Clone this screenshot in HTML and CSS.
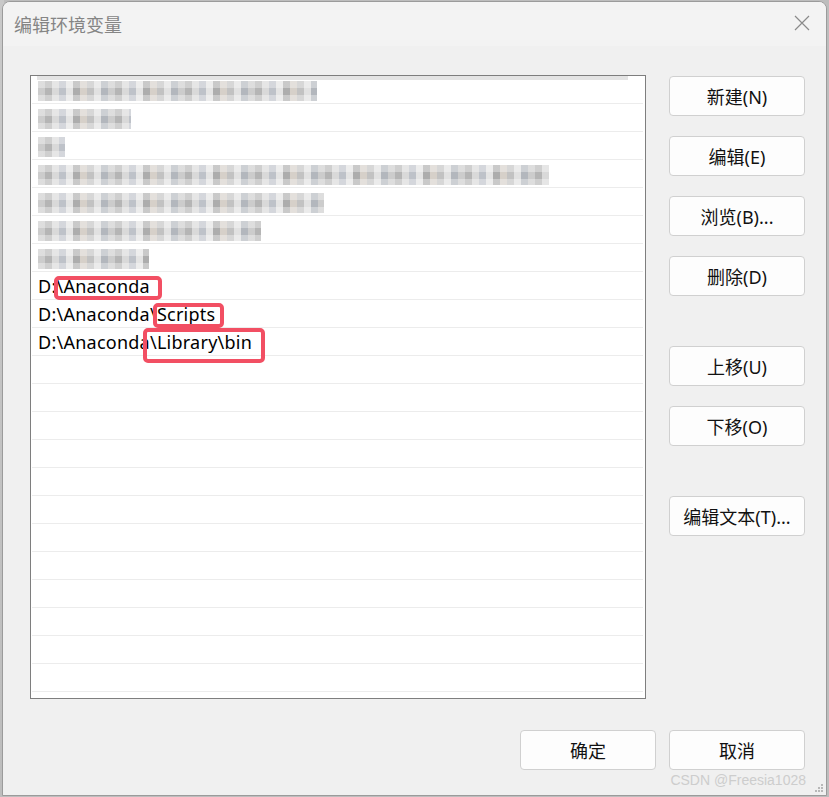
FILE: index.html
```html
<!DOCTYPE html>
<html lang="zh-CN">
<head>
<meta charset="utf-8">
<title>编辑环境变量</title>
<link rel="stylesheet" href="styles.css">
</head>
<body>
<div class="backdrop"></div>
<div class="window">
  <div class="titlebar">
    <span class="title">编辑环境变量</span>
    <svg class="close" width="16" height="16" viewBox="0 0 16 16"><path d="M1 1 L15 15 M15 1 L1 15" stroke="#8a8a8a" stroke-width="1.2" fill="none"/></svg>
  </div>
  <div class="content">
    <div class="main">
      <div class="list">
        <div class="topband"></div>
        <div class="row"><span class="mosaic m1"></span></div>
        <div class="row"><span class="mosaic m2"></span></div>
        <div class="row"><span class="mosaic m3"></span></div>
        <div class="row"><span class="mosaic m4"></span></div>
        <div class="row"><span class="mosaic m5"></span></div>
        <div class="row"><span class="mosaic m6"></span></div>
        <div class="row"><span class="mosaic m7"></span></div>
        <div class="row text">D:\Anaconda</div>
        <div class="row text">D:\Anaconda\Scripts</div>
        <div class="row text">D:\Anaconda\Library\bin</div>
        <div class="row"></div>
        <div class="row"></div>
        <div class="row"></div>
        <div class="row"></div>
        <div class="row"></div>
        <div class="row"></div>
        <div class="row"></div>
        <div class="row"></div>
        <div class="row"></div>
        <div class="row"></div>
        <div class="row"></div>
        <div class="row"></div>
        <span class="mark mark1"></span>
        <span class="mark mark2"></span>
        <span class="mark mark3"></span>
      </div>
      <div class="side">
        <div class="group">
          <button class="btn">新建(N)</button>
          <button class="btn">编辑(E)</button>
          <button class="btn">浏览(B)...</button>
          <button class="btn">删除(D)</button>
        </div>
        <div class="group">
          <button class="btn">上移(U)</button>
          <button class="btn">下移(O)</button>
        </div>
        <div class="group">
          <button class="btn">编辑文本(T)...</button>
        </div>
      </div>
    </div>
    <div class="footer">
      <button class="btn">确定</button>
      <button class="btn">取消</button>
    </div>
  </div>
  <span class="watermark">CSDN @Freesia1028</span>
  <svg class="grip" width="10" height="10" viewBox="0 0 10 10" fill="#b8b8b8"><rect x="7" y="1" width="2" height="2"/><rect x="4" y="4" width="2" height="2"/><rect x="7" y="4" width="2" height="2"/><rect x="1" y="7" width="2" height="2"/><rect x="4" y="7" width="2" height="2"/><rect x="7" y="7" width="2" height="2"/></svg>
</div>
</body>
</html>
```
FILE: styles.css
```css
html, body {
  margin: 0;
  padding: 0;
}
body {
  width: 829px;
  height: 797px;
  background: #bdbdbd;
  font-family: "Noto Sans", "Noto Sans CJK SC", sans-serif;
  position: relative;
  overflow: hidden;
}
.backdrop {
  position: absolute;
  left: 0;
  top: 0;
  width: 4px;
  height: 797px;
  background: linear-gradient(#c9c9c9, #bdbdbd);
}
.window {
  position: relative;
  margin: 1px 0 0 2px;
  width: 823px;
  height: 793px;
  border: 1px solid #9b9b9b;
  border-radius: 8px 8px 0 0;
  background: #f0f0f0;
  display: flex;
  flex-direction: column;
  overflow: hidden;
}
.titlebar {
  height: 44px;
  background: #f3f3f3;
  display: flex;
  align-items: center;
  justify-content: space-between;
  padding: 0 16px 0 11px;
  flex: none;
}
.title {
  font-family: "Noto Sans CJK SC", sans-serif;
  font-size: 18px;
  color: #858585;
  margin-top: -1px;
}
.close {
  display: block;
  margin-top: -2px;
}
.content {
  flex: 1;
  display: flex;
  flex-direction: column;
  padding: 29px 21px 0 27px;
}
.main {
  display: flex;
  gap: 23px;
}
.list {
  position: relative;
  width: 614px;
  height: 622px;
  border: 1px solid #7e7e7e;
  background: #fff;
  overflow: hidden;
}
.topband {
  position: absolute;
  left: 6px;
  top: 0;
  width: 591px;
  height: 4px;
  background: #e4e4e4;
}
.row {
  height: 28px;
  box-sizing: border-box;
  border-bottom: 1px solid #ececec;
  margin: 0 2px 0 1px;
  display: flex;
  align-items: center;
  padding-left: 6px;
  font-size: 18px;
  color: #000;
  white-space: nowrap;
}
.text {
  letter-spacing: 0.25px;
  padding-top: 1px;
}
.mosaic {
  display: block;
  height: 20px;
  margin-top: 2px;
  opacity: 0.85;
  filter: blur(0.7px);
  background:
    repeating-linear-gradient(180deg, rgba(255,255,255,0.35) 0 7px, rgba(255,255,255,0) 7px 14px),
    repeating-linear-gradient(90deg, #c4c4c4 0 7px, #a9a9a9 7px 14px, #d3d3d3 14px 21px, #b3b8c0 21px 28px, #e0e0e0 28px 35px, #9f9f9f 35px 42px, #cfc8c0 42px 49px, #b8b8b8 49px 56px, #dcdcdc 56px 63px, #a6abb2 63px 70px);
}
.m1 { width: 279px; }
.m2 { width: 93px; }
.m3 { width: 27px; }
.m4 { width: 511px; }
.m5 { width: 286px; }
.m6 { width: 223px; }
.m7 { width: 111px; }
.mark {
  position: absolute;
  border: 4px solid #f24f63;
  border-radius: 5px;
  box-sizing: border-box;
}
.mark1 { left: 23px; top: 200px; width: 108px; height: 24px; }
.mark2 { left: 122px; top: 227px; width: 71px; height: 25px; }
.mark3 { left: 112px; top: 252px; width: 122px; height: 35px; }
.side {
  display: flex;
  flex-direction: column;
  gap: 50px;
  padding-top: 1px;
}
.group {
  display: flex;
  flex-direction: column;
  gap: 20px;
}
.btn {
  width: 136px;
  height: 40px;
  box-sizing: border-box;
  border: 1px solid #d0d0d0;
  border-radius: 4px;
  background: #fdfdfd;
  font-family: "Noto Sans", "Noto Sans CJK SC", sans-serif;
  font-size: 18px;
  color: #111;
  padding: 0;
  display: flex;
  align-items: center;
  justify-content: center;
}
.footer {
  display: flex;
  justify-content: flex-end;
  gap: 13px;
  margin-top: 31px;
}
.watermark {
  position: absolute;
  right: 20px;
  bottom: 7px;
  font-family: "Liberation Sans", sans-serif;
  font-size: 14px;
  color: #cdcdcd;
}
.grip {
  position: absolute;
  right: 2px;
  bottom: 2px;
}
```
